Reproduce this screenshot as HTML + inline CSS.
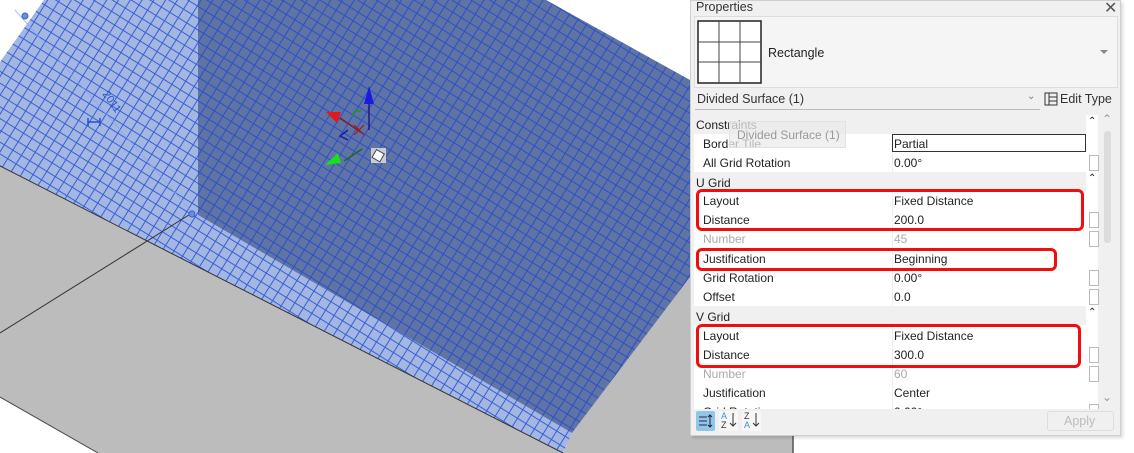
<!DOCTYPE html>
<html><head><meta charset="utf-8"><style>
html,body{margin:0;padding:0;width:1134px;height:453px;overflow:hidden;background:#fff;font-family:"Liberation Sans",sans-serif;}
.abs{position:absolute}
.t{position:absolute;font-size:12px;color:#222;white-space:nowrap}
</style></head><body>
<svg class="abs" style="left:0;top:0" width="1134" height="453">
<defs>
<pattern id="g1" width="10" height="10" patternUnits="userSpaceOnUse" patternTransform="rotate(32)">
<rect width="10" height="10" fill="#a4b6e2"/><path d="M0 0.5H10M0.5 0V10" stroke="#3560d6" stroke-width="1"/></pattern>
<pattern id="g2" width="10" height="10" patternUnits="userSpaceOnUse" patternTransform="rotate(32)">
<rect width="10" height="10" fill="#5f73a5"/><path d="M0 0.5H10M0.5 0V10" stroke="#2a50c8" stroke-width="1"/></pattern>
</defs>
<polygon points="0,166 563,453 0,453" fill="#bbbcbb"/>
<polygon points="0,397 98,453 0,453" fill="#fff"/>
<line x1="0" y1="397" x2="98" y2="453" stroke="#444" stroke-width="1"/>
<polygon points="572,433 690,277 690,453 563,453" fill="#bbbcbb"/>
<rect x="690" y="433" width="103" height="20" fill="#bbbcbb"/>
<line x1="793" y1="433" x2="793" y2="453" stroke="#555" stroke-width="1.5"/>
<polygon points="0,62 44,0 198,0 198,215 572,433 563,453 0,166" fill="url(#g1)"/>
<line x1="0" y1="166" x2="563" y2="453" stroke="#333" stroke-width="1"/>
<line x1="0" y1="333" x2="192" y2="213" stroke="#333" stroke-width="1"/>
<polygon points="198,0 546,0 690,80 690,277 572,433 198,215" fill="url(#g2)"/>
<line x1="15" y1="10" x2="192" y2="212" stroke="#8aa6f0" stroke-width="1" opacity=".7"/>
<circle cx="25" cy="16" r="3" fill="#6b8fe0" stroke="#3b5fc8"/>
<circle cx="192" cy="214" r="3" fill="#6b8fe0" stroke="#3b5fc8"/>
<text x="100" y="98" font-size="11" fill="#2a50c8" transform="rotate(55 105 98)" font-family="Liberation Sans">2011</text>
<path d="M88 118v8M88 122h12M100 118v8" stroke="#2a50c8" stroke-width="1.5" fill="none"/>
<line x1="369" y1="100" x2="369" y2="130" stroke="#1a1a8a" stroke-width="1.5"/>
<polygon points="369,86 364,104 374,104" fill="#1a1ae0"/>
<line x1="340" y1="118" x2="362" y2="133" stroke="#8a1a1a" stroke-width="1.5"/>
<polygon points="326,112 341,112 337,123" fill="#e01a1a"/>
<line x1="344" y1="161" x2="362" y2="149" stroke="#1a6a1a" stroke-width="1.5"/>
<polygon points="325,165 338,153 341,163" fill="#1ae01a"/>
<path d="M352 116l3-5M355 111h6" stroke="#1a9a1a" stroke-width="1.5" fill="none"/>
<path d="M348 130l-8 6l8 4" stroke="#1a1aa0" stroke-width="1.5" fill="none"/>
<path d="M354 125l10 10M364 125l-10 10" stroke="#a01a1a" stroke-width="1.2"/>
<rect x="371" y="148" width="15" height="15" fill="#ccc"/>
<rect x="374" y="151" width="9" height="9" fill="#fff" stroke="#446" transform="rotate(30 378 155)"/>
</svg>

<div class="abs" style="left:690px;top:0;width:429px;height:434px;background:#f0f0f0;border:1px solid #cfcfcf;box-shadow:2px 2px 3px rgba(0,0,0,.15)"></div>
<div class="t" style="left:696px;top:0px;font-size:12.5px;color:#333">Properties</div>
<div class="t" style="left:1104px;top:-2px;font-size:16px;color:#555">✕</div>
<div class="abs" style="left:694px;top:16px;width:422px;height:70px;background:#f5f5f5;border:1px solid #ddd"></div>
<svg class="abs" style="left:697px;top:20px" width="66" height="65">
<rect x="1" y="1" width="63" height="62" fill="#fff" stroke="#222" stroke-width="1.5"/>
<path d="M22 1V63M43 1V63M1 22H64M1 42H64" stroke="#444" stroke-width="1"/>
</svg>
<div class="t" style="left:768px;top:46px;font-size:12.5px">Rectangle</div>
<div class="abs" style="left:1100px;top:50px;border-left:4px solid transparent;border-right:4px solid transparent;border-top:4px solid #888"></div>
<div class="t" style="left:697px;top:92px;font-size:12.5px;color:#333">Divided Surface (1)</div>
<div class="abs" style="left:695px;top:109px;width:345px;height:1px;background:#bbb"></div>
<div class="t" style="left:1027px;top:91px;font-size:10px;color:#777">⌄</div>
<svg class="abs" style="left:1044px;top:92px" width="14" height="14"><rect x="1" y="1" width="12" height="12" fill="none" stroke="#333"/><path d="M5 1V13M5 5H13M5 9H13" stroke="#333"/></svg>
<div class="t" style="left:1060px;top:92px;font-size:12.5px;color:#333">Edit Type</div>

<div class="abs" style="left:694px;top:115px;width:392px;height:294px;background:#fff;overflow:hidden">
<div style="position:absolute;left:198px;top:0;width:1px;height:294px;background:#eee"></div>
</div>
<div class="abs" style="left:1086px;top:115px;width:12px;height:294px;background:#fff"></div>
<div class="abs" style="left:1098px;top:115px;width:18px;height:294px;background:#f0f0f0"></div>
<div class="abs" style="left:1104px;top:131px;width:7px;height:112px;background:#dcdcdc;border-radius:3px"></div>
<div class="t" style="left:1102px;top:112px;color:#999;font-size:12px">⌃</div>
<div class="t" style="left:1102px;top:390px;color:#999;font-size:12px">⌄</div>

<div class="abs" style="left:694px;top:115px;width:392px;height:19px;background:#f0f0f0"></div>
<div class="abs" style="left:694px;top:172px;width:392px;height:19px;background:#f0f0f0"></div>
<div class="abs" style="left:694px;top:306px;width:392px;height:19px;background:#f0f0f0"></div>
<div class="t" style="left:696px;top:118px">Constraints</div>
<div class="t" style="left:1088px;top:116px;font-size:10px">⌃</div>
<div class="t" style="left:696px;top:176px">U Grid</div>
<div class="t" style="left:1088px;top:173px;font-size:10px">⌃</div>
<div class="t" style="left:696px;top:310px">V Grid</div>
<div class="t" style="left:1088px;top:307px;font-size:10px">⌃</div>

<div class="t" style="left:703px;top:137px">Border Tile</div><div class="abs" style="left:892px;top:134px;width:192px;height:16px;border:1px solid #333;background:#fff"></div><div class="t" style="left:894px;top:137px">Partial</div>
<div class="t" style="left:703px;top:156px">All Grid Rotation</div><div class="t" style="left:894px;top:156px">0.00°</div>
<div class="t" style="left:703px;top:194px">Layout</div><div class="t" style="left:894px;top:194px">Fixed Distance</div>
<div class="t" style="left:703px;top:213px">Distance</div><div class="t" style="left:894px;top:213px">200.0</div>
<div class="t" style="left:703px;top:232px;color:#aaa">Number</div><div class="t" style="left:894px;top:232px;color:#aaa">45</div>
<div class="t" style="left:703px;top:252px">Justification</div><div class="t" style="left:894px;top:252px">Beginning</div>
<div class="t" style="left:703px;top:271px">Grid Rotation</div><div class="t" style="left:894px;top:271px">0.00°</div>
<div class="t" style="left:703px;top:290px">Offset</div><div class="t" style="left:894px;top:290px">0.0</div>
<div class="t" style="left:703px;top:329px">Layout</div><div class="t" style="left:894px;top:329px">Fixed Distance</div>
<div class="t" style="left:703px;top:348px">Distance</div><div class="t" style="left:894px;top:348px">300.0</div>
<div class="t" style="left:703px;top:367px;color:#aaa">Number</div><div class="t" style="left:894px;top:367px;color:#aaa">60</div>
<div class="t" style="left:703px;top:386px">Justification</div><div class="t" style="left:894px;top:386px">Center</div>
<div class="t" style="left:703px;top:405px">Grid Rotation</div><div class="t" style="left:894px;top:405px">0.00°</div>

<div class="abs" style="left:1089px;top:155px;width:8px;height:14px;border:1px solid #bbb"></div>
<div class="abs" style="left:1089px;top:212px;width:8px;height:14px;border:1px solid #bbb"></div>
<div class="abs" style="left:1089px;top:231px;width:8px;height:14px;border:1px solid #bbb"></div>
<div class="abs" style="left:1089px;top:270px;width:8px;height:14px;border:1px solid #bbb"></div>
<div class="abs" style="left:1089px;top:289px;width:8px;height:14px;border:1px solid #bbb"></div>
<div class="abs" style="left:1089px;top:347px;width:8px;height:14px;border:1px solid #bbb"></div>
<div class="abs" style="left:1089px;top:366px;width:8px;height:14px;border:1px solid #bbb"></div>
<div class="abs" style="left:1089px;top:404px;width:8px;height:5px;border:1px solid #bbb;border-bottom:none"></div>

<div class="abs" style="left:729px;top:121px;width:115px;height:25px;background:rgba(235,235,235,.75);border:1px solid #e2e2e2"></div>
<div class="t" style="left:737px;top:128px;color:#999">Divided Surface (1)</div>

<div class="abs" style="left:696px;top:189px;width:382px;height:36px;border:3px solid #f20c0c;border-radius:6px"></div>
<div class="abs" style="left:696px;top:248px;width:355px;height:17px;border:3px solid #f20c0c;border-radius:6px"></div>
<div class="abs" style="left:696px;top:324px;width:379px;height:38px;border:3px solid #f20c0c;border-radius:6px"></div>

<div class="abs" style="left:691px;top:409px;width:428px;height:25px;background:#f0f0f0"></div>
<div class="abs" style="left:696px;top:411px;width:19px;height:20px;background:#8ec7ea;border-radius:2px"></div>
<svg class="abs" style="left:698px;top:414px" width="15" height="14"><path d="M1 3H9M1 7H9M1 11H9" stroke="#446" stroke-width="1.3"/><path d="M12 1V13M10 3l2-2l2 2M10 11l2 2l2-2" stroke="#223" fill="none"/></svg>
<div class="abs" style="left:719px;top:411px;width:19px;height:20px;background:#f7f7f7"></div>
<div class="t" style="left:721px;top:412px;font-size:9px;line-height:9px;color:#3a8ee0">A<br><span style="color:#333">Z</span></div>
<svg class="abs" style="left:729px;top:412px" width="8" height="16"><path d="M4 1V14M1 11l3 3l3-3" stroke="#333" fill="none"/></svg>
<div class="abs" style="left:742px;top:411px;width:19px;height:20px;background:#f7f7f7"></div>
<div class="t" style="left:744px;top:412px;font-size:9px;line-height:9px;color:#333">Z<br><span style="color:#3a8ee0">A</span></div>
<svg class="abs" style="left:752px;top:412px" width="8" height="16"><path d="M4 1V14M1 11l3 3l3-3" stroke="#333" fill="none"/></svg>
<div class="abs" style="left:1047px;top:411px;width:65px;height:18px;border:1px solid #ddd;border-radius:3px"></div>
<div class="t" style="left:1064px;top:414px;color:#bbb;font-size:12.5px">Apply</div>
</body></html>
